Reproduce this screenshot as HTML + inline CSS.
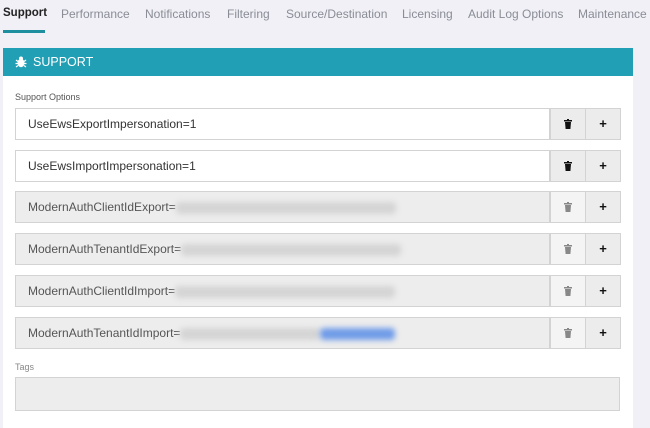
<!DOCTYPE html>
<html><head><style>
body{margin:0;width:650px;height:418px;background:#f0f0f6;font-family:"Liberation Sans",sans-serif;position:relative;overflow:hidden}
.tab{position:absolute;top:7px;font-size:12px;color:#8a8d96;white-space:nowrap}
.tab.a{color:#222;font-weight:bold;font-size:11.5px}
.ul{position:absolute;left:3px;top:30px;width:42px;height:3px;background:#1e8f9e}
.panel{position:absolute;left:3px;top:48px;width:630px;height:380px;background:#fff}
.hdr{height:28px;background:#209fb5;color:#fff;font-size:12.5px;line-height:28px;padding-left:30px;position:relative}
.lbl{position:absolute;left:12px;font-size:9px;color:#555}
.row{position:absolute;left:12px;width:605px;height:32px}
.in{position:absolute;left:0;top:0;height:30px;border:1px solid #d3d3d3;background:#fff;font-size:12px;color:#333;line-height:30px;padding-left:12px;width:521px;white-space:nowrap}
.in.d{background:#ededed;color:#555}
.b{position:absolute;top:0;width:34px;height:30px;border:1px solid #d3d3d3;background:#ececec;text-align:center;line-height:30px;font-size:13px;font-weight:bold;color:#111}
.b svg{position:absolute;left:13px;top:10px}
.t{left:535px}.p{left:570px}
.t.d{background:#f4f4f4}
.blur{display:inline-block;vertical-align:middle;width:220px;height:12px;background:#d4d4d4;filter:blur(3px);border-radius:4px}
</style></head><body>
<span class="tab a" style="left:3px">Support</span>
<span class="tab" style="left:61px">Performance</span>
<span class="tab" style="left:145px">Notifications</span>
<span class="tab" style="left:227px">Filtering</span>
<span class="tab" style="left:286px">Source/Destination</span>
<span class="tab" style="left:402px">Licensing</span>
<span class="tab" style="left:468px">Audit Log Options</span>
<span class="tab" style="left:578px">Maintenance</span>
<div class="ul"></div>
<div class="panel">
<div class="hdr"><svg style="position:absolute;left:12px;top:8px" width="12" height="12" viewBox="0 0 12 12"><ellipse cx="6" cy="7" rx="3.5" ry="4.2" fill="#fff"/><circle cx="6" cy="2.5" r="2" fill="#fff"/><path d="M1 4l2 1.5M11 4l-2 1.5M0.5 7.5h2.5M11.5 7.5H9M1 11l2-1.5M11 11l-2-1.5" stroke="#fff" stroke-width="1.2"/></svg>SUPPORT</div>
<div class="lbl" style="top:44px">Support Options</div>
<div class="row" style="top:60px"><div class="in">UseEwsExportImpersonation=1</div><div class="b t"><svg width="8" height="10" viewBox="0 0 8 10"><rect x="0" y="1" width="8" height="1.5" fill="#111"/><rect x="3" y="0" width="2" height="1" fill="#111"/><path d="M1 3h6l-.6 7H1.6z" fill="#111"/></svg></div><div class="b p">+</div></div>
<div class="row" style="top:102px"><div class="in">UseEwsImportImpersonation=1</div><div class="b t"><svg width="8" height="10" viewBox="0 0 8 10"><rect x="0" y="1" width="8" height="1.5" fill="#111"/><rect x="3" y="0" width="2" height="1" fill="#111"/><path d="M1 3h6l-.6 7H1.6z" fill="#111"/></svg></div><div class="b p">+</div></div>
<div class="row" style="top:143px"><div class="in d">ModernAuthClientIdExport=<span class="blur"></span></div><div class="b t d"><svg width="8" height="10" viewBox="0 0 8 10"><rect x="0" y="1" width="8" height="1.5" fill="#888"/><rect x="3" y="0" width="2" height="1" fill="#888"/><path d="M1 3h6l-.6 7H1.6z" fill="#888"/></svg></div><div class="b p">+</div></div>
<div class="row" style="top:185px"><div class="in d">ModernAuthTenantIdExport=<span class="blur"></span></div><div class="b t d"><svg width="8" height="10" viewBox="0 0 8 10"><rect x="0" y="1" width="8" height="1.5" fill="#888"/><rect x="3" y="0" width="2" height="1" fill="#888"/><path d="M1 3h6l-.6 7H1.6z" fill="#888"/></svg></div><div class="b p">+</div></div>
<div class="row" style="top:227px"><div class="in d">ModernAuthClientIdImport=<span class="blur"></span></div><div class="b t d"><svg width="8" height="10" viewBox="0 0 8 10"><rect x="0" y="1" width="8" height="1.5" fill="#888"/><rect x="3" y="0" width="2" height="1" fill="#888"/><path d="M1 3h6l-.6 7H1.6z" fill="#888"/></svg></div><div class="b p">+</div></div>
<div class="row" style="top:269px"><div class="in d">ModernAuthTenantIdImport=<span class="blur" style="width:140px"></span><span class="blur" style="width:75px;background:#6f9be8"></span></div><div class="b t d"><svg width="8" height="10" viewBox="0 0 8 10"><rect x="0" y="1" width="8" height="1.5" fill="#888"/><rect x="3" y="0" width="2" height="1" fill="#888"/><path d="M1 3h6l-.6 7H1.6z" fill="#888"/></svg></div><div class="b p">+</div></div>
<div class="lbl" style="top:314px;color:#888">Tags</div>
<div style="position:absolute;left:12px;top:329px;width:603px;height:32px;border:1px solid #d3d3d3;background:#ededed"></div>
</div>
</body></html>
